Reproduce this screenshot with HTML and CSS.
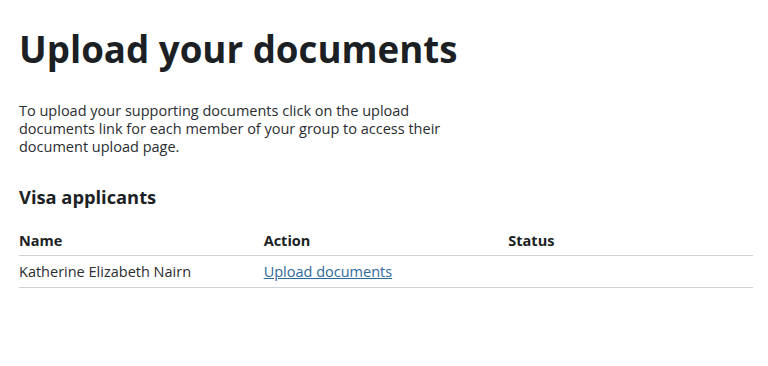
FILE: index.html
```html
<!DOCTYPE html>
<html lang="en">
<head>
<meta charset="utf-8">
<title>Upload your documents</title>
<link rel="stylesheet" href="styles.css">
</head>
<body>
<main class="page">
  <h1 class="title">Upload your documents</h1>
  <p class="intro">To upload your supporting documents click on the upload documents link for each member of your group to access their document upload page.</p>
  <h2 class="subtitle">Visa applicants</h2>
  <table class="applicants">
    <thead>
      <tr><th>Name</th><th>Action</th><th>Status</th></tr>
    </thead>
    <tbody>
      <tr><td>Katherine Elizabeth Nairn</td><td><a href="#" class="link">Upload documents</a></td><td></td></tr>
    </tbody>
  </table>
</main>
</body>
</html>
```

FILE: styles.css
```css
html, body {
  margin: 0;
  padding: 0;
  background: #ffffff;
}
body {
  font-family: "Open Sans", "Noto Sans", sans-serif;
  color: #1f2226;
}
.page {
  padding: 25px 15px 0 19px;
}
.title {
  margin: 0;
  font-size: 36.7px;
  line-height: 48px;
  font-weight: 700;
  color: #1c1f24;
}
.intro {
  margin: 29px 0 0 0;
  width: 450px;
  font-size: 14.5px;
  line-height: 18px;
  color: #2a2d31;
}
.subtitle {
  margin: 28px 0 0 0;
  font-size: 18.3px;
  line-height: 26px;
  font-weight: 700;
  color: #1c1f24;
}
.applicants {
  margin-top: 18px;
  width: 734px;
  border-collapse: collapse;
  table-layout: fixed;
  font-size: 14.5px;
}
.applicants th,
.applicants td {
  text-align: left;
  padding: 0;
  border-bottom: 1px solid #cfd3d7;
  vertical-align: top;
}
.applicants th {
  font-weight: 700;
  line-height: 18px;
  padding: 4px 0 5px 0;
  color: #1c1f24;
}
.applicants td {
  line-height: 18px;
  padding: 7px 0 6px 0;
  color: #2a2d31;
}
.link {
  color: #2d6a9a;
  text-decoration: underline;
}
```
